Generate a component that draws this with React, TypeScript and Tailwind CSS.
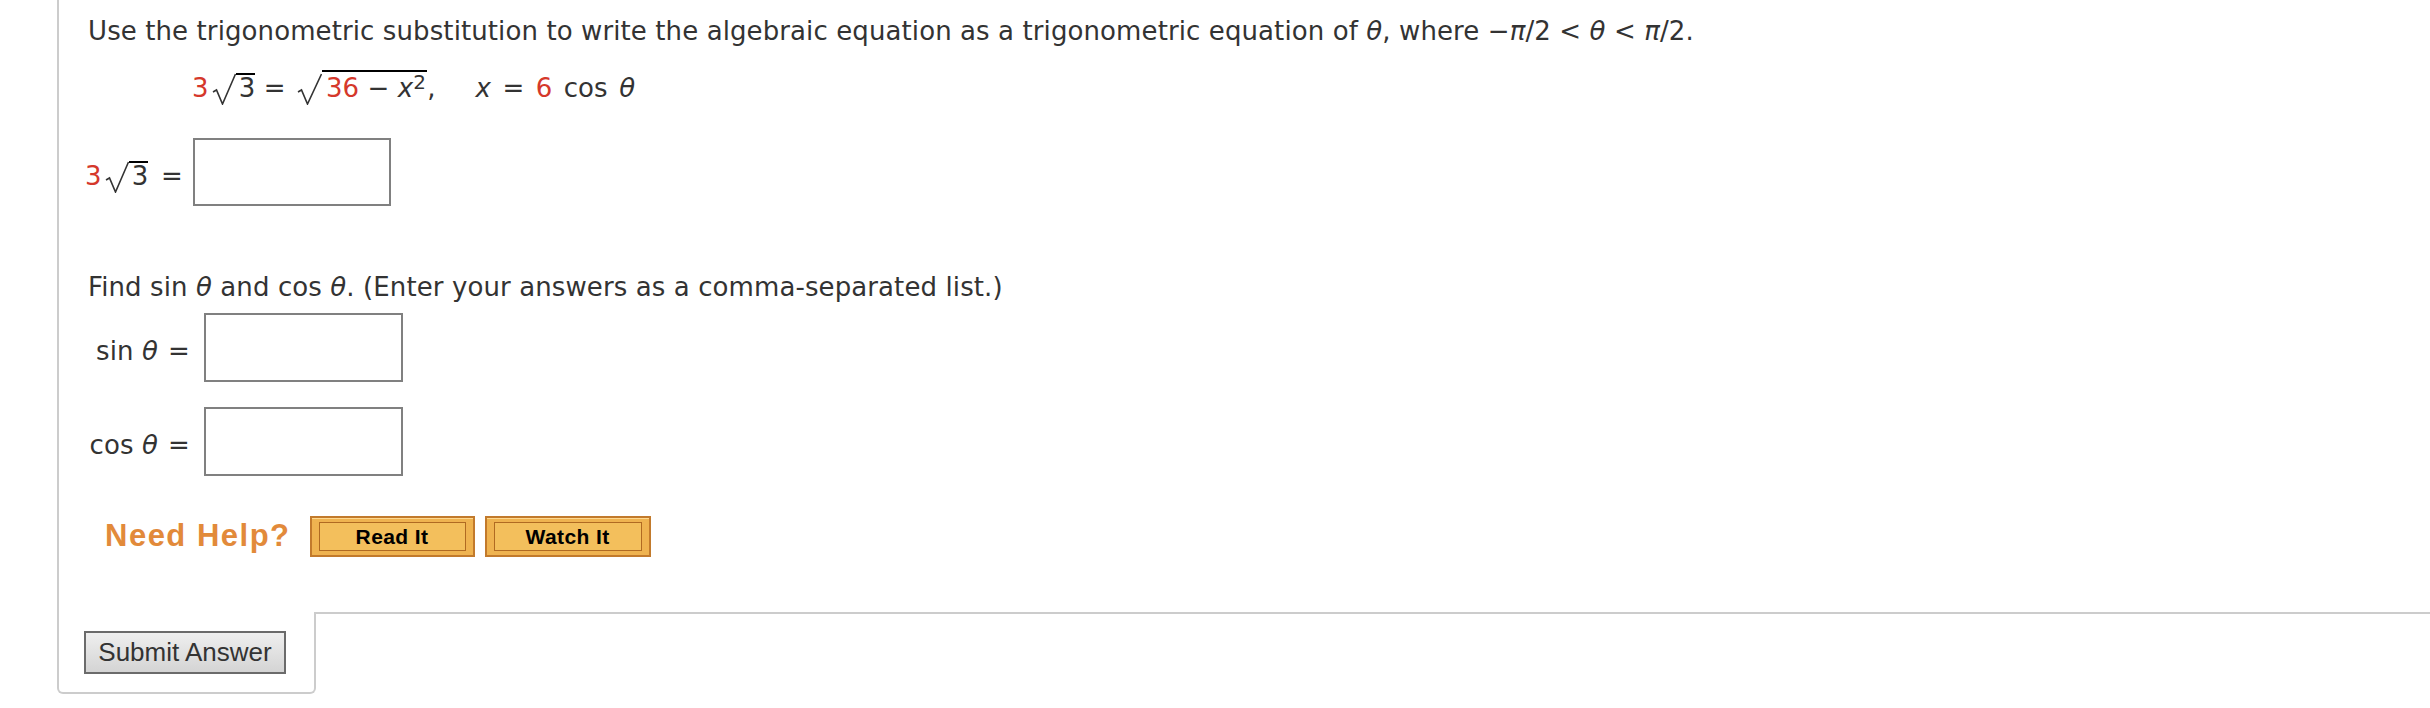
import React from "react";

function Radical({ w = 24 }: { w?: number }) {
  return (
    <svg
      width={w}
      height={32}
      viewBox={`0 0 ${w} 32`}
      className="ml-[3px] inline-block align-[-8px]"
    >
      <path
        d={`M1 19 L4.5 17 L10.5 31 L${w - 0.5} 1`}
        stroke="#333333"
        strokeWidth="1.6"
        fill="none"
        strokeLinejoin="miter"
      />
    </svg>
  );
}

function Sqrt({ children, w = 24, pad = "pl-[3px]" }: { children: React.ReactNode; w?: number; pad?: string }) {
  return (
    <span className="whitespace-nowrap">
      <Radical w={w} />
      <span className={`inline-block border-t-2 border-black leading-[26px] ${pad}`}>{children}</span>
    </span>
  );
}

function HelpButton({ label, w }: { label: string; w: string }) {
  return (
    <button
      className={`${w} h-[41px] border-2 border-[#c27a2c] bg-[#efb350] px-[7px] py-[4px] shadow-[inset_0_1px_0_#ffd98f]`}
    >
      <span className="flex h-full items-center justify-center border border-[#b06a22] bg-[#f3bf5c] font-['Liberation_Sans'] text-[21px] font-bold tracking-[0.4px] text-black">
        {label}
      </span>
    </button>
  );
}

export default function App() {
  return (
    <div className="h-[708px] w-[2430px] overflow-hidden bg-white font-['DejaVu_Sans',sans-serif] text-[26px] tracking-[0.1px] text-[#333333]">
      <div className="ml-[57px] h-[612px] border-l-2 border-[#cccccc] pl-[29px]">
        {/* line 1 */}
        <div className="pt-[13px] leading-[36px] whitespace-nowrap">
          Use the trigonometric substitution to write the algebraic equation as a trigonometric equation of <i>θ</i>, where −<i>π</i>/2 &lt; <i>θ</i> &lt; <i>π</i>/2.
        </div>

        {/* equation */}
        <div className="ml-[104px] mt-[21px] h-[36px] leading-[36px] whitespace-nowrap">
          <span className="text-[#d5382b]">3</span>
          <Sqrt>3</Sqrt> ={" "}
          <Sqrt w={25} pad="pl-[4px] pr-[1px]">
            <span className="text-[#d5382b]">36</span> − <i>x</i>
            <span className="inline-block align-[8px] text-[20px] leading-none">2</span>
          </Sqrt>
          ,<span className="inline-block w-[40px]" />
          <span className="[word-spacing:3px]">
            <i>x</i> = <span className="text-[#d5382b]">6</span> cos <i>θ</i>
          </span>
        </div>

        {/* row 3 */}
        <div className="mt-[32px] flex h-[68px] items-center">
          <span className="-ml-[3px] w-[76px] pt-[7px] leading-[36px] whitespace-nowrap">
            <span className="text-[#d5382b]">3</span>
            <Sqrt>3</Sqrt>
          </span>
          <span className="pt-[7px] leading-[36px]">=</span>
          <div className="ml-[10px] h-[68px] w-[198px] border-2 border-[#808080] bg-white" />
        </div>

        {/* find */}
        <div className="mt-[63px] leading-[36px] whitespace-nowrap">
          Find sin <i>θ</i> and cos <i>θ</i>. (Enter your answers as a comma-separated list.)
        </div>

        {/* sin */}
        <div className="mt-[8px] flex h-[69px] items-center">
          <span className="w-[70px] pt-[7px] text-right leading-[36px] whitespace-nowrap">
            sin <i>θ</i>
          </span>
          <span className="ml-[10px] pt-[7px] leading-[36px]">=</span>
          <div className="ml-[14px] h-[69px] w-[199px] border-2 border-[#808080] bg-white" />
        </div>

        {/* cos */}
        <div className="mt-[25px] flex h-[69px] items-center">
          <span className="w-[70px] pt-[7px] text-right leading-[36px] whitespace-nowrap">
            cos <i>θ</i>
          </span>
          <span className="ml-[10px] pt-[7px] leading-[36px]">=</span>
          <div className="ml-[14px] h-[69px] w-[199px] border-2 border-[#808080] bg-white" />
        </div>

        {/* need help */}
        <div className="mt-[40px] flex h-[41px] items-center">
          <span className="ml-[17px] font-['Liberation_Sans'] text-[31px] font-bold tracking-[1.5px] text-[#e28a3a] whitespace-nowrap">
            Need Help?
          </span>
          <div className="ml-[19px] flex gap-[10px]">
            <HelpButton label="Read It" w="w-[165px]" />
            <HelpButton label="Watch It" w="w-[166px]" />
          </div>
        </div>
      </div>

      <div className="flex">
        <div className="ml-[57px] h-[82px] w-[259px] rounded-b-[6px] border-x-2 border-b-2 border-[#cccccc] pl-[25px] pt-[19px]">
          <button className="h-[43px] w-[202px] border-2 border-[#6b6b6b] bg-gradient-to-b from-[#efefef] to-[#d4d4d4] font-['Liberation_Sans'] text-[26px] tracking-[0px] text-[#333333]">
            Submit Answer
          </button>
        </div>
        <div className="flex-1 border-t-2 border-[#cccccc]" />
      </div>
    </div>
  );
}
